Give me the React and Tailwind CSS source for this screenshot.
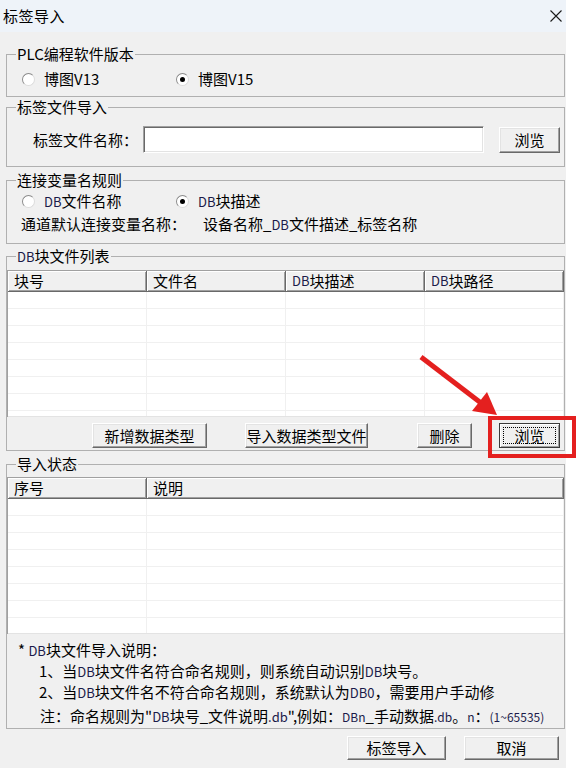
import React from 'react'

const FONT = "font-['Noto_Sans_CJK_SC','Microsoft_YaHei',sans-serif]"

// ── Windows-classic controls ───────────────────────────────
function Btn({ children, className = '', focused = false }) {
  if (focused) {
    return (
      <button className={`flex items-center justify-center bg-[#f0f0f0] border border-[#3a3a3a] shadow-[inset_1px_1px_0_#fff,inset_-1px_-1px_0_#a0a0a0] p-[3px] ${className}`}>
        <span className="w-full h-full flex items-center justify-center border border-dotted border-black leading-[18px]">
          {children}
        </span>
      </button>
    )
  }
  return (
    <button className={`flex items-center justify-center bg-[#f0f0f0] border border-t-white border-l-white border-r-[#696969] border-b-[#696969] shadow-[inset_-1px_-1px_0_#a0a0a0,inset_1px_1px_0_#e3e3e3] leading-[20px] ${className}`}>
      {children}
    </button>
  )
}

function Radio({ checked, children, className = '' }) {
  return (
    <div className={`flex items-center h-[20px] ${className}`}>
      <span className="w-[13px] h-[13px] shrink-0 rounded-full bg-white border border-t-[#8a8a8a] border-l-[#8a8a8a] border-r-[#dcdcdc] border-b-[#dcdcdc] flex items-center justify-center">
        {checked && <span className="w-[5px] h-[5px] rounded-full bg-black" />}
      </span>
      <span className="ml-[9px]">{children}</span>
    </div>
  )
}

function Group({ title, className = '', children }) {
  return (
    <fieldset className={`w-[559px] ml-[6px] border border-[#b0b0b0] ${className}`}>
      <legend className="ml-[9px] px-[1px] leading-[20px]">{title}</legend>
      {children}
    </fieldset>
  )
}

function Db({ children = 'DB', className = 'text-[13px]' }) {
  return <span className={`text-[#1b1b4a] ${className}`}>{children}</span>
}

function ListView({ columns, bodyHeight, rows }) {
  return (
    <div className="border-l border-[#a0a0a0] bg-white">
      <div className="flex h-[22px] border-t border-[#a0a0a0]">
        {columns.map((c, i) => (
          <div
            key={i}
            className={`h-full flex items-center pl-[6px] bg-[#f0f0f0] border-r border-b border-[#696969] shadow-[inset_1px_1px_0_#fff,inset_-1px_-1px_0_#a0a0a0] ${c.w}`}
          >
            {c.label}
          </div>
        ))}
      </div>
      <div className="overflow-hidden border-b border-[#e3e3e3]" style={{ height: bodyHeight }}>
        {Array.from({ length: rows }).map((_, r) => (
          <div key={r} className="flex h-[17px] border-b border-[#f0f0f0]">
            {columns.map((c, i) => (
              <div key={i} className={`h-full border-r border-[#f0f0f0] ${c.w}`} />
            ))}
          </div>
        ))}
      </div>
    </div>
  )
}

const DB_COLUMNS = [
  { label: '块号', w: 'w-[139px]' },
  { label: '文件名', w: 'w-[139px]' },
  { label: <><Db />块描述</>, w: 'w-[139px]' },
  { label: <><Db />块路径</>, w: 'flex-1' },
]

const STATUS_COLUMNS = [
  { label: '序号', w: 'w-[139px]' },
  { label: '说明', w: 'flex-1' },
]

export default function App() {
  return (
    <div className={`w-[577px] h-[768px] bg-white text-[15px] text-black ${FONT}`}>
      <div className="relative w-[566px] h-full bg-[#f0f0f0] flex flex-col">
        {/* Title bar */}
        <div className="h-[32px] bg-[#eef3f9] flex items-center justify-between pl-[3px] pr-[4px]">
          <span className="text-[15px] leading-[20px] tracking-[0.5px]">标签导入</span>
          <svg width="12" height="12" viewBox="0 0 12 12" className="text-[#1a1a1a]">
            <path d="M0.5 0.5 L11.5 11.5 M11.5 0.5 L0.5 11.5" stroke="currentColor" strokeWidth="1.1" />
          </svg>
        </div>

        {/* PLC version */}
        <Group title="PLC编程软件版本" className="mt-[12px] h-[53px]">
          <div className="flex mt-[5px] pl-[15px]">
            <Radio className="w-[154px]">博图V13</Radio>
            <Radio checked>博图V15</Radio>
          </div>
        </Group>

        {/* Tag file */}
        <Group title="标签文件导入" className="h-[70px]">
          <div className="flex items-center mt-[9px] pl-[26px] h-[27px]">
            <span className="w-[110px] leading-[20px]">标签文件名称：</span>
            <div className="w-[341px] h-[27px] bg-white border border-t-[#a0a0a0] border-l-[#a0a0a0] border-r-white border-b-white shadow-[inset_1px_1px_0_#696969,inset_-1px_-1px_0_#e3e3e3]" />
            <Btn className="ml-[15px] w-[61px] h-[26px]">浏览</Btn>
          </div>
        </Group>

        {/* Naming rule */}
        <Group title="连接变量名规则" className="mt-[3px] h-[74px]">
          <div className="flex mt-[1px] pl-[15px]">
            <Radio className="w-[154px]"><Db />文件名称</Radio>
            <Radio checked><Db />块描述</Radio>
          </div>
          <div className="flex mt-[3px] pl-[14px] leading-[20px]">
            <span>通道默认连接变量名称：</span>
            <span className="ml-[17px]">设备名称_<Db />文件描述_标签名称</span>
          </div>
        </Group>

        {/* DB file list */}
        <Group title={<><Db />块文件列表</>} className="mt-[2px] h-[205px]">
          <div className="mt-[3px]">
            <ListView columns={DB_COLUMNS} bodyHeight={125} rows={8} />
          </div>
          <div className="flex mt-[6px] h-[25px]">
            <Btn className="ml-[85px] w-[115px] h-[25px]">新增数据类型</Btn>
            <Btn className="ml-[38px] w-[123px] h-[25px]">导入数据类型文件</Btn>
            <Btn className="ml-[49px] w-[55px] h-[25px]">删除</Btn>
            <Btn focused className="ml-[27px] w-[61px] h-[25px]">浏览</Btn>
          </div>
        </Group>

        {/* Import status */}
        <Group title="导入状态" className="mt-[3px] h-[275px]">
          <div className="mt-[3px]">
            <ListView columns={STATUS_COLUMNS} bodyHeight={135} rows={8} />
          </div>
          <div className="mt-[6px] leading-[20px]">
            <p className="pl-[11px]">* <Db />块文件导入说明：</p>
            <p className="pl-[32px]">1、当<Db />块文件名符合命名规则，则系统自动识别<Db />块号。</p>
            <p className="pl-[32px]">2、当<Db />块文件名不符合命名规则，系统默认为<Db>DB0</Db>，需要用户手动修</p>
            <p className="pl-[33px] mt-[3px]">
              注：命名规则为"<Db />块号_文件说明<Db>.db</Db>",例如：<Db className="text-[12px]">DBn</Db>_手动数据<Db className="text-[12px]">.db</Db>。<Db className="text-[12px]">n</Db>：<Db className="text-[12px]">(1~65535)</Db>
            </p>
          </div>
        </Group>

        {/* Dialog buttons */}
        <div className="flex mt-[7px] h-[24px]">
          <Btn className="ml-[347px] w-[99px] h-[24px]">标签导入</Btn>
          <Btn className="ml-[18px] w-[95px] h-[24px]">取消</Btn>
        </div>

        {/* Annotation overlay: red arrow + highlight box */}
        <svg className="absolute left-0 top-0 pointer-events-none" width="577" height="768">
          <line x1="421" y1="357" x2="481" y2="403" stroke="#e4201f" strokeWidth="5" />
          <polygon points="497,415 472,411 487,392" fill="#e4201f" />
        </svg>
        <div className="absolute left-[488px] top-[416px] w-[88px] h-[42px] border-4 border-[#e4201f]" />
      </div>
    </div>
  )
}
